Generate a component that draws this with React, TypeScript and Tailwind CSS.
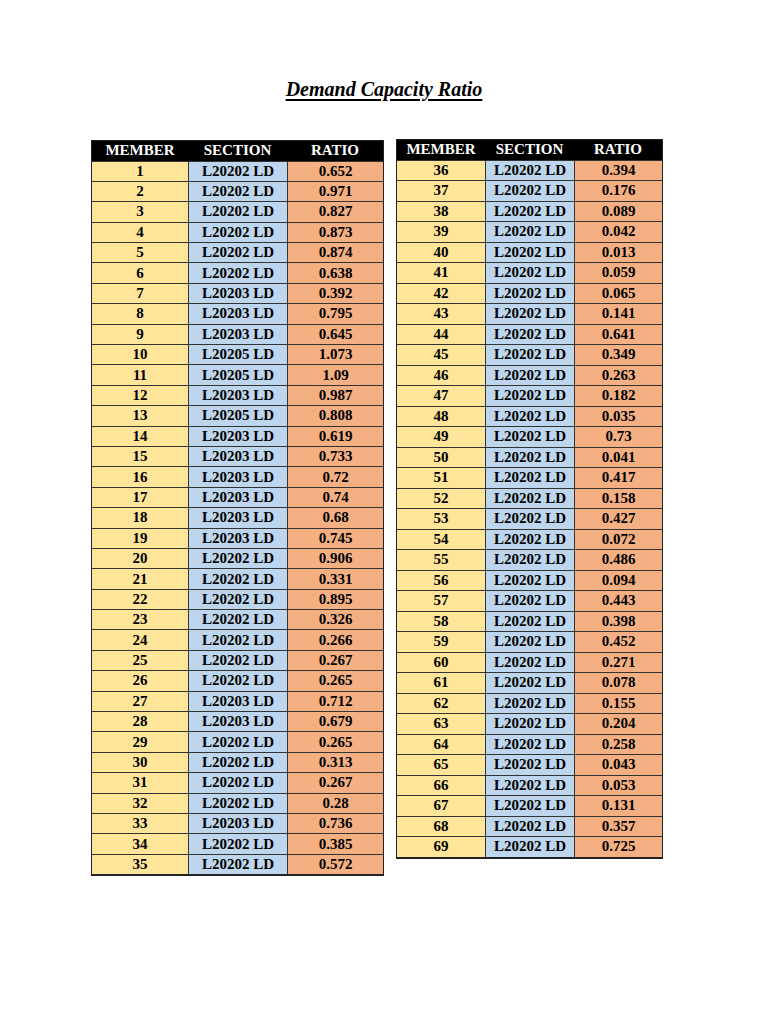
const left: [number, string, string][] = [
  [1, "L20202 LD", "0.652"],
  [2, "L20202 LD", "0.971"],
  [3, "L20202 LD", "0.827"],
  [4, "L20202 LD", "0.873"],
  [5, "L20202 LD", "0.874"],
  [6, "L20202 LD", "0.638"],
  [7, "L20203 LD", "0.392"],
  [8, "L20203 LD", "0.795"],
  [9, "L20203 LD", "0.645"],
  [10, "L20205 LD", "1.073"],
  [11, "L20205 LD", "1.09"],
  [12, "L20203 LD", "0.987"],
  [13, "L20205 LD", "0.808"],
  [14, "L20203 LD", "0.619"],
  [15, "L20203 LD", "0.733"],
  [16, "L20203 LD", "0.72"],
  [17, "L20203 LD", "0.74"],
  [18, "L20203 LD", "0.68"],
  [19, "L20203 LD", "0.745"],
  [20, "L20202 LD", "0.906"],
  [21, "L20202 LD", "0.331"],
  [22, "L20202 LD", "0.895"],
  [23, "L20202 LD", "0.326"],
  [24, "L20202 LD", "0.266"],
  [25, "L20202 LD", "0.267"],
  [26, "L20202 LD", "0.265"],
  [27, "L20203 LD", "0.712"],
  [28, "L20203 LD", "0.679"],
  [29, "L20202 LD", "0.265"],
  [30, "L20202 LD", "0.313"],
  [31, "L20202 LD", "0.267"],
  [32, "L20202 LD", "0.28"],
  [33, "L20203 LD", "0.736"],
  [34, "L20202 LD", "0.385"],
  [35, "L20202 LD", "0.572"],
];

const rightRatios = [
  "0.394", "0.176", "0.089", "0.042", "0.013", "0.059", "0.065", "0.141", "0.641",
  "0.349", "0.263", "0.182", "0.035", "0.73", "0.041", "0.417", "0.158", "0.427",
  "0.072", "0.486", "0.094", "0.443", "0.398", "0.452", "0.271", "0.078", "0.155",
  "0.204", "0.258", "0.043", "0.053", "0.131", "0.357", "0.725",
];
const right: [number, string, string][] = rightRatios.map((r, i) => [36 + i, "L20202 LD", r]);

type Props = {
  rows: [number, string, string][];
  cols: [string, string, string];
  rowH: string;
};

const Table = ({ rows, cols, rowH }: Props) => (
  <div className="border border-[#222] border-b-2">
    <div className="flex h-[20px] bg-black text-white">
      {["MEMBER", "SECTION", "RATIO"].map((h, i) => (
        <div key={h} className={`${cols[i]} flex items-center justify-center leading-none`}>
          {h}
        </div>
      ))}
    </div>
    {rows.map(([m, s, r]) => (
      <div key={m} className={`flex ${rowH} border-t border-[#333] text-black`}>
        <div className={`${cols[0]} flex items-center justify-center bg-[#fee599] leading-none`}>{m}</div>
        <div className={`${cols[1]} flex items-center justify-center bg-[#bdd6ee] border-l border-[#333] leading-none`}>{s}</div>
        <div className={`${cols[2]} flex items-center justify-center bg-[#f4b083] border-l border-[#333] leading-none`}>{r}</div>
      </div>
    ))}
  </div>
);

export default function App() {
  return (
    <div className="min-h-screen bg-white font-['Liberation_Serif','Times_New_Roman',serif] font-bold text-[15px]">
      <div className="pt-[77px] text-center">
        <h1 className="inline-block text-[20px] leading-[24px] italic underline decoration-2 underline-offset-[3px]">
          Demand Capacity Ratio
        </h1>
      </div>
      <div className="flex items-start gap-[12px] pl-[91px] mt-[37px]">
        <div className="w-[293px]">
          <Table rows={left} cols={["w-[96px]", "w-[99px]", "flex-1"]} rowH="h-[20.4px]" />
        </div>
        <div className="w-[267px] -mt-[1px]">
          <Table rows={right} cols={["w-[88px]", "w-[89px]", "flex-1"]} rowH="h-[20.5px]" />
        </div>
      </div>
    </div>
  );
}
